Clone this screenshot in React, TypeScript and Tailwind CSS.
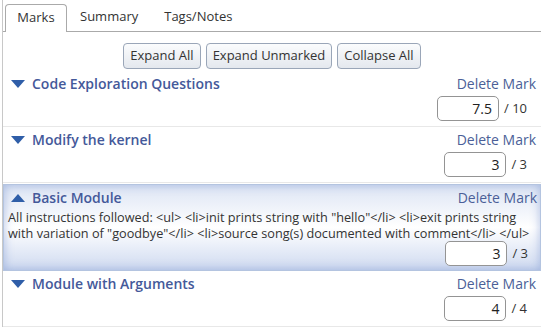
import React from 'react';

type Mark = {
  title: string;
  value: string;
  max: number;
  open?: boolean;
  comment?: string;
};

const marks: Mark[] = [
  { title: 'Code Exploration Questions', value: '7.5', max: 10 },
  { title: 'Modify the kernel', value: '3', max: 3 },
  {
    title: 'Basic Module',
    value: '3',
    max: 3,
    open: true,
    comment:
      'All instructions followed: <ul> <li>init prints string with "hello"</li> <li>exit prints string with variation of "goodbye"</li> <li>source song(s) documented with comment</li> </ul>',
  },
  { title: 'Module with Arguments', value: '4', max: 4 },
];

function Triangle({ up }: { up?: boolean }) {
  return (
    <svg width="14" height="8" viewBox="0 0 14 8" className="shrink-0">
      <polygon points={up ? '0,8 14,8 7,0' : '0,0 14,0 7,8'} fill="#2f5ea8" />
    </svg>
  );
}

function MarkRow({ m }: { m: Mark }) {
  return (
    <div
      className={
        m.open
          ? 'mt-[1px] border border-[#b4c4e0] bg-gradient-to-b from-[#dde5f4] via-white to-[#cfdaf0] pl-[4px] pr-[2px] pt-[4px] pb-[4px] shadow-[inset_0_0_10px_rgba(130,155,210,0.6)]'
          : 'border-b border-[#e8e8e8] px-[5px] pt-[4px] pb-[5px]'
      }
    >
      <div className="flex h-[18px] items-center justify-between">
        <div className="flex items-center gap-[7px] pl-[3px]">
          <Triangle up={m.open} />
          <span className="text-[14px] leading-[18px] font-semibold text-[#44599a]">{m.title}</span>
        </div>
        <span className={m.open ? 'mr-[1px] text-[14px] leading-[18px] text-[#4b5f98]' : 'text-[14px] leading-[18px] text-[#4b5f98]'}>Delete Mark</span>
      </div>
      {m.comment && (
        <p className="mt-[2px] text-[12.7px] leading-[16px] text-[#333]">{m.comment}</p>
      )}
      <div className={m.comment ? 'flex items-center justify-end' : 'mt-[3px] flex items-center justify-end'}>
        <div className="flex h-[25px] w-[62px] items-center justify-end rounded-[5px] border border-[#949494] bg-white px-[6px] text-[14px] text-[#222]">
          {m.value}
        </div>
        <span className={m.open ? 'ml-[5px] mr-[10px] text-[13px] text-[#333]' : 'ml-[5px] mr-[9px] text-[13px] text-[#333]'}>/ {m.max}</span>
      </div>
    </div>
  );
}

export default function App() {
  return (
    <div className="h-[336px] w-[559px] overflow-hidden bg-white font-['Open_Sans',sans-serif]">
      <div className="ml-[2px] w-[539px] border-l border-[#c8c8c8]">
        <div className="flex h-[32px] items-end border-b border-[#aaa] pl-[2px]">
          <div className="mb-[-1px] flex h-[28px] w-[62px] items-center justify-center rounded-t-[4px] border border-b-0 border-[#aaa] bg-white pb-[1px] text-[13px] text-[#333]">
            Marks
          </div>
          <div className="flex h-[28px] items-center px-[13px] pb-[1px] text-[13px] text-[#333]">Summary</div>
          <div className="flex h-[28px] items-center px-[13px] pb-[1px] text-[13px] text-[#333]">Tags/Notes</div>
        </div>
        <div className="flex justify-center gap-[5px] pt-[11px] pb-[2px]">
          {['Expand All', 'Expand Unmarked', 'Collapse All'].map((b) => (
            <button
              key={b}
              className="h-[26px] rounded-[4px] border border-[#9aa6b8] bg-gradient-to-b from-[#fbfcfd] to-[#e4e8ee] px-[6px] text-[13px] text-[#333]"
            >
              {b}
            </button>
          ))}
        </div>
        {marks.map((m) => (
          <MarkRow key={m.title} m={m} />
        ))}
      </div>
    </div>
  );
}
